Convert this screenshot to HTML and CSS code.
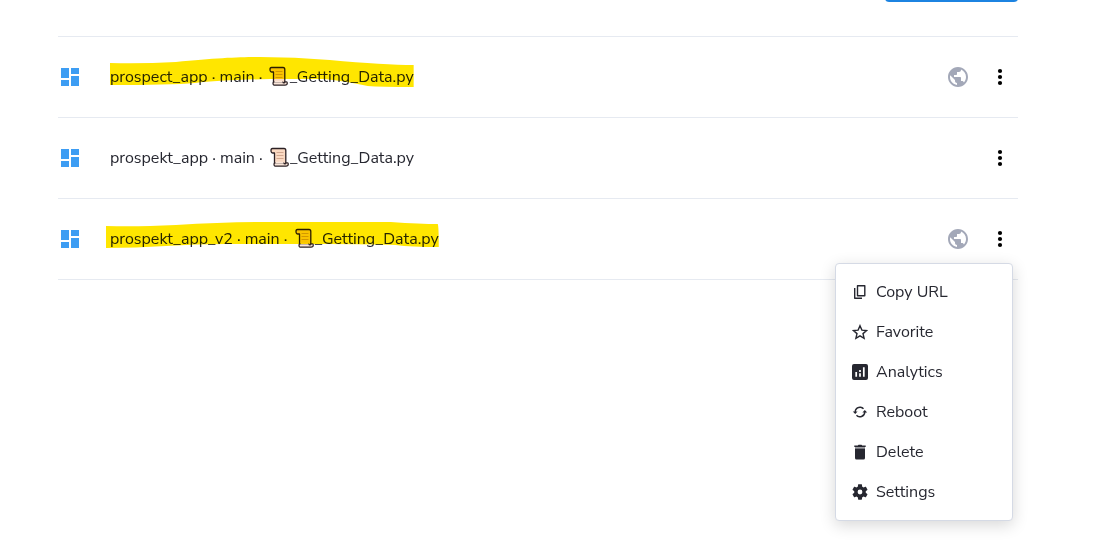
FILE: index.html
```html
<!DOCTYPE html>
<html lang="en">
<head>
<meta charset="utf-8">
<meta name="viewport" content="width=device-width, initial-scale=1">
<title>Apps</title>
<link rel="stylesheet" href="styles.css">
</head>
<body>
<svg class="sprite" aria-hidden="true">
  <symbol id="dashboard" viewBox="0 0 24 24"><path d="M3 13h8V3H3v10zm0 8h8v-6H3v6zm10 0h8V11h-8v10zm0-18v6h8V3h-8z"/></symbol>
  <symbol id="globe" viewBox="0 0 24 24"><path d="M12 2C6.48 2 2 6.48 2 12s4.480 10 10 10 10-4.480 10-10S17.520 2 12 2zm-1 17.930c-3.950-.490-7-3.850-7-7.930 0-.620.080-1.210.210-1.790L9 15v1c0 1.100.9 2 2 2v1.930zm6.900-2.540c-.260-.810-1-1.390-1.900-1.390h-1v-3c0-.550-.450-1-1-1H8v-2h2c.550 0 1-.450 1-1V7h2c1.100 0 2-.9 2-2v-.410c2.930 1.190 5 4.060 5 7.410 0 2.080-.8 3.970-2.100 5.390z"/></symbol>
  <symbol id="dots" viewBox="0 0 24 24"><circle cx="12" cy="6" r="2.100"/><circle cx="12" cy="12" r="2.100"/><circle cx="12" cy="18" r="2.100"/></symbol>
  <symbol id="scroll" viewBox="0 0 20 20">
    <path d="M2.500 1.500H14q1.800 0 1.800 2V17H4.500V6H3Q1 6 1 3.500q0-2 1.500-2z" fill="#fad9c2" stroke="#2b2024" stroke-width="1.300" stroke-linejoin="round"/>
    <path d="M6.500 5.500h7M6.500 8.500h7M6.500 11.500h7" stroke="#d3a890" stroke-width="1"/>
    <path d="M5 15.800h8.500q.5 1.200 1.500 1.200.8 0 1-1.200h1.500q.8 0 .8 1.200 0 2.200-2.300 2.200H6q-2 0-2-1.800 0-1.200 1-1.600z" fill="#fbe6da" stroke="#2b2024" stroke-width="1.200" stroke-linejoin="round"/>
    <path d="M5.500 15.600h8" stroke="#fbe6da" stroke-width="1.800"/>
  </symbol>
</svg>
<main class="page">
  <header class="toolbar"><button class="new-app" type="button" aria-label="New app"></button></header>
  <ul class="apps">
    <li class="app">
      <svg class="app-icon" aria-hidden="true"><use href="#dashboard"/></svg>
      <a class="app-name" href="#">prospect_app · main · <svg class="scroll" role="img" aria-label="scroll"><use href="#scroll"/></svg>_Getting_Data.py
        <svg class="marker" viewBox="0 0 304 32" preserveAspectRatio="none" aria-hidden="true"><path d="M0 6Q30 7 66 5C105 1 130 0 150 0Q185 0 220 3Q275 8 304 8V30Q270 30 258 29Q235 24 215 22H160Q110 23 85 26Q60 28 0 28z"/></svg></a>
      <div class="actions">
        <svg class="globe" role="img" aria-label="Public"><use href="#globe"/></svg>
        <button class="more" type="button" aria-label="More"><svg><use href="#dots"/></svg></button>
      </div>
    </li>
    <li class="app">
      <svg class="app-icon" aria-hidden="true"><use href="#dashboard"/></svg>
      <a class="app-name" href="#">prospekt_app · main · <svg class="scroll" role="img" aria-label="scroll"><use href="#scroll"/></svg>_Getting_Data.py</a>
      <div class="actions">
        <button class="more" type="button" aria-label="More"><svg><use href="#dots"/></svg></button>
      </div>
    </li>
    <li class="app">
      <svg class="app-icon" aria-hidden="true"><use href="#dashboard"/></svg>
      <a class="app-name" href="#">prospekt_app_v2 · main · <svg class="scroll" role="img" aria-label="scroll"><use href="#scroll"/></svg>_Getting_Data.py
        <svg class="marker marker-wide" viewBox="0 0 333 32" preserveAspectRatio="none" aria-hidden="true"><path d="M0 7Q30 8 70 6Q120 3 165 3H285Q315 5 332 5Q333 7 333 28Q305 28 290 26Q265 25 220 25H120Q90 25 60 27Q30 29 0 29z"/></svg></a>
      <div class="actions">
        <svg class="globe" role="img" aria-label="Public"><use href="#globe"/></svg>
        <button class="more" type="button" aria-label="More" aria-expanded="true"><svg><use href="#dots"/></svg></button>
        <div class="menu" role="menu">
          <button class="item" role="menuitem" type="button"><svg viewBox="0 0 16 16"><path d="M5.500 1.700h7.300v10H5.500z" fill="none" stroke="currentColor" stroke-width="1.400" stroke-linejoin="round"/><path d="M2.700 4v10.300H10" fill="none" stroke="currentColor" stroke-width="1.400" stroke-linejoin="round"/></svg>Copy URL</button>
          <button class="item" role="menuitem" type="button"><svg viewBox="0 0 16 16"><path d="M8 1.700l1.900 4.400 4.700.4-3.600 3.100 1.100 4.700L8 11.800l-4.100 2.500L5 9.600 1.400 6.500l4.700-.4z" fill="none" stroke="currentColor" stroke-width="1.400"/></svg>Favorite</button>
          <button class="item" role="menuitem" type="button"><svg viewBox="0 0 24 24"><path fill-rule="evenodd" d="M3 0h18q3 0 3 3v18q0 3-3 3H3q-3 0-3-3V3q0-3 3-3zm2 12v7h2.600v-7zm5.700-3v3h2.600V9zm0 5v5h2.600v-5zM16.400 5v14H19V5z"/></svg>Analytics</button>
          <button class="item" role="menuitem" type="button"><svg viewBox="0 0 16 16"><path d="M3.200 9V8A4.800 4.800 0 0 1 6.500 3.500M8.500 3.200A4.800 4.800 0 0 1 11.500 4.700M12.800 7V8A4.800 4.800 0 0 1 9.500 12.500M7.500 12.800A4.800 4.800 0 0 1 4.500 11.300M6.500 3.500Q7.500 3.100 8.500 3.200M9.500 12.500Q8.500 12.900 7.500 12.800" fill="none" stroke="currentColor" stroke-width="1.400"/><path d="M.8 7.500h4.800L3.200 9.900zM10.400 8.500h4.800l-2.400-2.400z"/></svg>Reboot</button>
          <button class="item" role="menuitem" type="button"><svg viewBox="0 0 16 16"><path d="M3 4.500h10V14q0 1.500-1.500 1.500h-7Q3 15.500 3 14z"/><path d="M2.300 1.600h3.500L6.500.7h3l.7.9h3.500v1.500H2.300z"/><path d="M3 3.100h10v1.400H3z" opacity=".5"/></svg>Delete</button>
          <button class="item" role="menuitem" type="button"><svg viewBox="2 2 20 20"><path d="M19.140 12.940c.040-.3.060-.610.060-.940 0-.320-.020-.640-.070-.940l2.030-1.580c.180-.140.230-.410.120-.610l-1.920-3.320c-.120-.220-.370-.290-.590-.220l-2.390.960c-.5-.380-1.030-.7-1.620-.940l-.360-2.540c-.040-.240-.240-.410-.480-.410h-3.840c-.240 0-.430.170-.470.410l-.360 2.540c-.590.240-1.130.570-1.620.940l-2.390-.960c-.220-.080-.470 0-.590.220L2.740 8.870c-.120.210-.080.470.120.610l2.030 1.580c-.050.3-.090.630-.090.940s.020.640.070.940l-2.030 1.580c-.180.140-.230.410-.120.610l1.920 3.320c.120.220.370.290.590.220l2.390-.960c.5.380 1.030.7 1.620.940l.360 2.540c.050.240.240.410.480.410h3.840c.240 0 .440-.170.470-.410l.360-2.540c.590-.240 1.130-.560 1.620-.940l2.390.960c.220.080.470 0 .590-.220l1.920-3.320c.120-.220.070-.470-.120-.610l-2.010-1.580zM12 15a3 3 0 1 1 0-6 3 3 0 0 1 0 6z"/></svg>Settings</button>
        </div>
      </div>
    </li>
  </ul>
</main>
</body>
</html>
```

FILE: styles.css
```css
* { box-sizing: border-box; }
html { background: #fff; }
body {
  margin: 0;
  min-height: 100vh;
  color: #262730;
  font-family: "Nunito Sans", "Nunito", "Open Sans", sans-serif;
  font-size: 16px;
  line-height: 24px;
}
button { font: inherit; color: inherit; border: 0; background: none; padding: 0; cursor: pointer; }
svg { fill: currentColor; }
.sprite { position: absolute; width: 0; height: 0; }
.page { padding: 0 96px 0 58px; }
.toolbar { display: flex; justify-content: flex-end; align-items: flex-end; height: 2px; overflow: hidden; margin-bottom: 34px; }
.new-app { flex: none; width: 133px; height: 40px; border-radius: 4px; background: #1c83e1; }
.apps { list-style: none; margin: 0; padding: 0; border-top: 1px solid #e6eaf1; }
.app { display: flex; align-items: center; gap: 28px; min-height: 81px; border-bottom: 1px solid #e6eaf1; }
.app-icon { flex: none; width: 24px; height: 24px; color: #3d9df3; }
.app-name { position: relative; color: inherit; text-decoration: none; white-space: nowrap; }
.scroll { width: 20px; height: 20px; margin-left: 3px; vertical-align: -4px; }
.marker { position: absolute; left: 0; top: -8px; width: 100%; height: 32px; fill: #ffe600; mix-blend-mode: multiply; pointer-events: none; }
.marker-wide { left: -4px; width: calc(100% + 4px); }
.actions { position: relative; display: flex; align-items: center; gap: 18px; margin-left: auto; padding-right: 6px; }
.globe { width: 24px; height: 24px; color: #a3a8b8; }
.more { width: 24px; height: 24px; color: #000; }
.more svg { display: block; width: 24px; height: 24px; }
.menu {
  position: absolute;
  top: 36px;
  right: 5px;
  z-index: 1;
  width: 178px;
  padding: 8px 0;
  border: 1px solid #d5dae5;
  border-radius: 4px;
  background: #fff;
  box-shadow: 0 4px 16px rgba(0, 0, 0, 0.16);
}
.item { display: flex; align-items: center; gap: 8px; width: 100%; padding: 8px 16px; text-align: left; }
.item svg { flex: none; width: 16px; height: 16px; }
```
